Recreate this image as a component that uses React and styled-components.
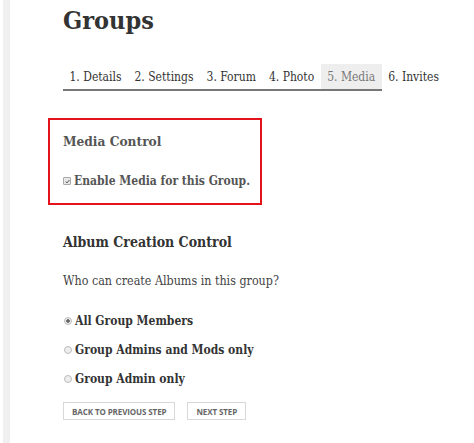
import styled, { createGlobalStyle } from 'styled-components'

const GlobalStyle = createGlobalStyle`
  html, body {
    margin: 0;
    padding: 0;
    background: #fff;
  }
  body {
    font-family: "DejaVu Serif", "Liberation Serif", serif;
    font-stretch: condensed;
    color: #333;
  }
`

const Page = styled.div`
  display: flex;
  height: 443px;
  overflow: hidden;
  padding-left: 3px;
  box-sizing: border-box;
`

const SideStrip = styled.div`
  width: 7px;
  flex: none;
  background: #f0f0f0;
`

const Content = styled.main`
  flex: 1;
  padding: 6px 0 0 53px;
`

const Title = styled.h1`
  margin: 0;
  font-size: 25px;
  line-height: 30px;
  font-weight: 700;
  color: #333;
`

const TabsRow = styled.div`
  display: flex;
  align-items: flex-start;
  margin-top: 28px;
`

const Tabs = styled.nav`
  display: flex;
  border-bottom: 2px solid #777;
`

const Tab = styled.a`
  display: block;
  padding: 0 6.5px;
  height: 25px;
  line-height: 27px;
  font-size: 12px;
  color: ${p => (p.$active ? '#777' : '#333')};
  background: ${p => (p.$active ? '#eee' : 'transparent')};
  text-decoration: none;
  white-space: nowrap;
`

const Highlight = styled.section`
  width: 184px;
  margin: 27px 0 0 -15px;
  padding: 11px 13px 13px;
  border: 2px solid #e3121b;
`

const BoxHeading = styled.h3`
  margin: 0;
  font-size: 13.6px;
  line-height: 20px;
  font-weight: 700;
  color: #555;
`

const CheckRow = styled.label`
  display: flex;
  align-items: center;
  gap: 3px;
  margin-top: 21px;
  font-size: 12px;
  line-height: 18px;
  font-weight: 700;
  color: #555;
  white-space: nowrap;
`

const TinyCheck = styled.span`
  width: 6px;
  height: 6px;
  border: 1px solid #aaa;
  border-radius: 1px;
  background: #e8e8e8;
  display: inline-flex;
  align-items: center;
  justify-content: center;
  flex: none;
`

const SectionHeading = styled.h3`
  margin: 27px 0 0;
  font-size: 14px;
  line-height: 20px;
  font-weight: 700;
  color: #333;
`

const Question = styled.p`
  margin: 20px 0 0;
  font-size: 12.4px;
  line-height: 18px;
  color: #444;
`

const Options = styled.div`
  display: flex;
  flex-direction: column;
  gap: 11px;
  margin-top: 22px;
`

const RadioRow = styled.label`
  display: flex;
  align-items: center;
  gap: 3px;
  font-size: 12px;
  line-height: 18px;
  font-weight: 700;
  color: #333;
`

const TinyRadio = styled.span`
  width: 6px;
  height: 6px;
  margin-left: 1px;
  border-radius: 50%;
  border: 1px solid #bbb;
  background: ${p => (p.$checked ? 'radial-gradient(circle, #666 0 1.5px, #eee 2px)' : '#eee')};
  flex: none;
`

const Actions = styled.div`
  display: flex;
  gap: 12px;
  margin-top: 14px;
`

const StepButton = styled.button`
  height: 18px;
  padding: 0 8px;
  border: 1px solid #d8d8d8;
  background: #fff;
  font-family: "Open Sans", "Noto Sans", sans-serif;
  font-stretch: normal;
  font-size: 8px;
  font-weight: 700;
  letter-spacing: -0.1px;
  text-transform: uppercase;
  color: #666;
  cursor: pointer;
`

const tabs = ['1. Details', '2. Settings', '3. Forum', '4. Photo', '5. Media']
const options = ['All Group Members', 'Group Admins and Mods only', 'Group Admin only']

export default function App() {
  return (
    <>
      <GlobalStyle />
      <Page>
        <SideStrip />
        <Content>
          <Title>Groups</Title>
          <TabsRow>
            <Tabs>
              {tabs.map(t => (
                <Tab key={t} $active={t === '5. Media'}>{t}</Tab>
              ))}
            </Tabs>
            <Tab>6. Invites</Tab>
          </TabsRow>

          <Highlight>
            <BoxHeading>Media Control</BoxHeading>
            <CheckRow>
              <TinyCheck>
                <svg width="5" height="5" viewBox="0 0 5 5">
                  <path d="M0.6 2.6 L2 3.9 L4.4 1" fill="none" stroke="#555" strokeWidth="1" />
                </svg>
              </TinyCheck>
              Enable Media for this Group.
            </CheckRow>
          </Highlight>

          <SectionHeading>Album Creation Control</SectionHeading>
          <Question>Who can create Albums in this group?</Question>

          <Options>
            {options.map((o, i) => (
              <RadioRow key={o}>
                <TinyRadio $checked={i === 0} />
                {o}
              </RadioRow>
            ))}
          </Options>

          <Actions>
            <StepButton>Back to Previous Step</StepButton>
            <StepButton>Next Step</StepButton>
          </Actions>
        </Content>
      </Page>
    </>
  )
}
